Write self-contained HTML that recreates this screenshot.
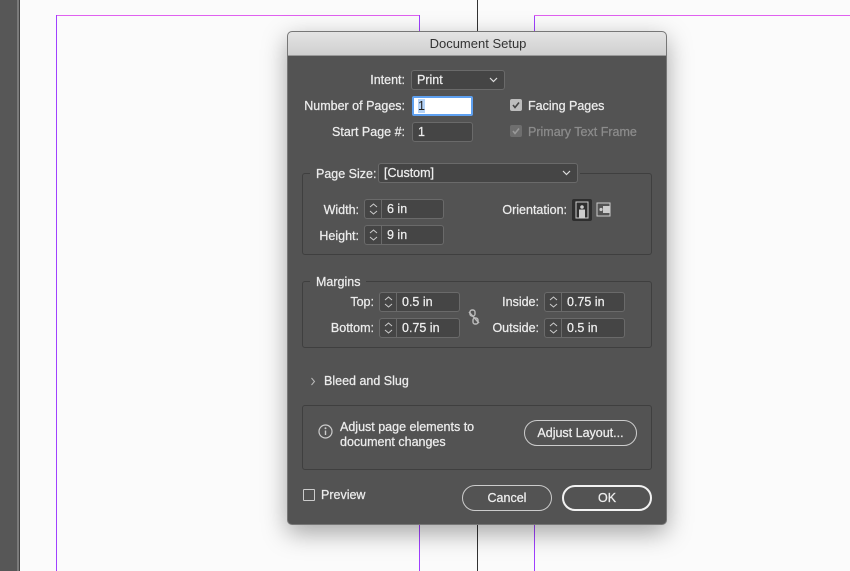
<!DOCTYPE html>
<html><head><meta charset="utf-8"><style>
*{box-sizing:border-box;margin:0;padding:0}
body{width:850px;height:571px;overflow:hidden;background:#fbfbfb;position:relative;font-family:"Liberation Sans",sans-serif;font-size:12.5px;color:#ececec}
.a{position:absolute}
.lbl,.txt,.fld,.spin,.btn{-webkit-text-stroke:0.25px currentColor}
.lbl{position:absolute;text-align:right;line-height:14px}
.txt{position:absolute;line-height:14px;white-space:nowrap}
.fld{position:absolute;background:#454545;border:1px solid #6a6a6a;border-radius:3px;height:20px;line-height:18px;padding-left:5px;color:#eee}
.spin{position:absolute;background:#454545;border:1px solid #6a6a6a;border-radius:3px;height:20px;line-height:18px;color:#eee}
.spin .s{position:absolute;left:0;top:0;width:17px;height:18px;border-right:1px solid #6a6a6a}
.spin .v{position:absolute;left:22px;top:0}
.box{position:absolute;border:1px solid #3f3f3f;border-radius:3px}
.cb{position:absolute;width:12px;height:12px;border-radius:2px}
.btn{position:absolute;border:1px solid #ccc;border-radius:13px;text-align:center;color:#eee}
.chev{position:absolute;right:6px;top:5px}
</style></head><body>
<div class="a" style="left:0;top:0;width:17px;height:571px;background:#575757"></div>
<div class="a" style="left:17px;top:0;width:2px;height:571px;background:#7a7a7a"></div>
<div class="a" style="left:19px;top:0;width:1px;height:571px;background:#444"></div>
<div class="a" style="left:56px;top:15px;width:364px;height:1px;background:#e060f0"></div>
<div class="a" style="left:56px;top:15px;width:1px;height:556px;background:#a040ff"></div>
<div class="a" style="left:419px;top:15px;width:1px;height:556px;background:#a040ff"></div>
<div class="a" style="left:477px;top:0;width:1px;height:571px;background:#333"></div>
<div class="a" style="left:534px;top:15px;width:1px;height:556px;background:#a040ff"></div>
<div class="a" style="left:534px;top:15px;width:316px;height:1px;background:#e060f0"></div>

<div class="a" style="left:287px;top:31px;width:380px;height:494px;background:#535353;border-radius:5px;box-shadow:0 8px 25px rgba(0,0,0,.35);overflow:hidden;border:1px solid #777">
  <div class="a" style="left:0;top:0;width:380px;height:24px;background:linear-gradient(#e4e4e4,#cfcfcf);border-bottom:1px solid #999;color:#333;text-align:center;line-height:24px;font-size:13px">Document Setup</div>
</div>

<div class="lbl" style="left:300px;top:73px;width:105px">Intent:</div>
<div class="fld" style="left:411px;top:70px;width:94px">Print<svg class="chev" width="9" height="8"><path d="M1 2l3.5 3.5L8 2" stroke="#ddd" stroke-width="1.2" fill="none"/></svg></div>
<div class="lbl" style="left:290px;top:99px;width:115px">Number of Pages:</div>
<div class="a" style="left:412px;top:96px;width:61px;height:20px;background:#fff;border:2px solid #5ea0f0;border-radius:2px;color:#222;line-height:16px;padding-left:4px"><span style="background:#b5d3f7">1</span></div>
<div class="lbl" style="left:300px;top:125px;width:105px">Start Page #:</div>
<div class="fld" style="left:412px;top:122px;width:61px">1</div>
<div class="cb" style="left:510px;top:99px;background:#bdbdbd"><svg width="12" height="12"><path d="M3 6l2 2.5 4-5" stroke="#444" stroke-width="1.6" fill="none"/></svg></div>
<div class="txt" style="left:528px;top:99px">Facing Pages</div>
<div class="cb" style="left:510px;top:125px;background:#6e6e6e"><svg width="12" height="12"><path d="M3 6l2 2.5 4-5" stroke="#999" stroke-width="1.6" fill="none"/></svg></div>
<div class="txt" style="left:528px;top:125px;color:#8c8c8c">Primary Text Frame</div>

<div class="box" style="left:302px;top:173px;width:350px;height:82px"></div>
<div class="a" style="left:310px;top:165px;width:270px;height:18px;background:#535353"></div>
<div class="txt" style="left:316px;top:167px">Page Size:</div>
<div class="fld" style="left:378px;top:163px;width:200px">[Custom]<svg class="chev" width="9" height="8"><path d="M1 2l3.5 3.5L8 2" stroke="#ddd" stroke-width="1.2" fill="none"/></svg></div>
<div class="lbl" style="left:300px;top:203px;width:59px">Width:</div>
<div class="spin" style="left:364px;top:199px;width:80px"><div class="s"><svg width="17" height="18"><path d="M5 7l3.5-3 3.5 3M5 11l3.5 3 3.5-3" stroke="#ccc" fill="none"/></svg></div><span class="v">6 in</span></div>
<div class="lbl" style="left:300px;top:229px;width:59px">Height:</div>
<div class="spin" style="left:364px;top:225px;width:80px"><div class="s"><svg width="17" height="18"><path d="M5 7l3.5-3 3.5 3M5 11l3.5 3 3.5-3" stroke="#ccc" fill="none"/></svg></div><span class="v">9 in</span></div>
<div class="lbl" style="left:480px;top:203px;width:87px">Orientation:</div>
<div class="a" style="left:572px;top:199px;width:20px;height:22px;background:#2e2e2e;border-radius:2px"><svg width="20" height="22"><rect x="4" y="3" width="12" height="16" fill="none" stroke="#ccc"/><circle cx="10" cy="8" r="1.8" fill="#ccc"/><rect x="7" y="10.5" width="6" height="8" fill="#ccc"/></svg></div>
<div class="a" style="left:596px;top:201px"><svg width="16" height="18"><rect x="1" y="2" width="13" height="13" fill="none" stroke="#ccc"/><circle cx="5" cy="8.5" r="1.6" fill="#ccc"/><rect x="7" y="5" width="7" height="7" fill="#ccc"/></svg></div>

<div class="box" style="left:302px;top:281px;width:350px;height:67px"></div>
<div class="a" style="left:310px;top:274px;width:56px;height:16px;background:#535353"></div>
<div class="txt" style="left:316px;top:275px">Margins</div>
<div class="lbl" style="left:310px;top:295px;width:64px">Top:</div>
<div class="spin" style="left:379px;top:292px;width:81px"><div class="s"><svg width="17" height="18"><path d="M5 7l3.5-3 3.5 3M5 11l3.5 3 3.5-3" stroke="#ccc" fill="none"/></svg></div><span class="v">0.5 in</span></div>
<div class="lbl" style="left:310px;top:321px;width:64px">Bottom:</div>
<div class="spin" style="left:379px;top:318px;width:81px"><div class="s"><svg width="17" height="18"><path d="M5 7l3.5-3 3.5 3M5 11l3.5 3 3.5-3" stroke="#ccc" fill="none"/></svg></div><span class="v">0.75 in</span></div>
<div class="a" style="left:467px;top:308px"><svg width="14" height="18"><rect x="3" y="2" width="5" height="6" rx="2" stroke="#bbb" stroke-width="1.4" fill="none"/><rect x="6" y="10" width="5" height="6" rx="2" stroke="#bbb" stroke-width="1.4" fill="none"/><path d="M2 4l10 11" stroke="#bbb" stroke-width="1.5"/></svg></div>
<div class="lbl" style="left:470px;top:295px;width:69px">Inside:</div>
<div class="spin" style="left:544px;top:292px;width:81px"><div class="s"><svg width="17" height="18"><path d="M5 7l3.5-3 3.5 3M5 11l3.5 3 3.5-3" stroke="#ccc" fill="none"/></svg></div><span class="v">0.75 in</span></div>
<div class="lbl" style="left:470px;top:321px;width:69px">Outside:</div>
<div class="spin" style="left:544px;top:318px;width:81px"><div class="s"><svg width="17" height="18"><path d="M5 7l3.5-3 3.5 3M5 11l3.5 3 3.5-3" stroke="#ccc" fill="none"/></svg></div><span class="v">0.5 in</span></div>

<div class="a" style="left:310px;top:375px"><svg width="6" height="9"><path d="M1.5 1l3 3.5-3 3.5" stroke="#bbb" fill="none"/></svg></div>
<div class="txt" style="left:324px;top:374px">Bleed and Slug</div>

<div class="box" style="left:302px;top:405px;width:350px;height:65px"></div>
<div class="a" style="left:318px;top:424px"><svg width="15" height="15"><circle cx="7.5" cy="7.5" r="6.5" stroke="#ccc" fill="none" stroke-width="1.2"/><circle cx="7.5" cy="4.3" r="1" fill="#ccc"/><path d="M7.5 6.5v4.5" stroke="#ccc" stroke-width="1.4"/></svg></div>
<div class="txt" style="left:340px;top:420px;line-height:15px">Adjust page elements to<br>document changes</div>
<div class="btn" style="left:524px;top:420px;width:113px;height:26px;line-height:24px">Adjust Layout...</div>

<div class="cb" style="left:303px;top:489px;border:1px solid #ccc;border-radius:1px"></div>
<div class="txt" style="left:321px;top:488px">Preview</div>
<div class="btn" style="left:462px;top:485px;width:90px;height:26px;line-height:24px">Cancel</div>
<div class="btn" style="left:562px;top:485px;width:90px;height:26px;line-height:22px;border:2px solid #f2f2f2">OK</div>
</body></html>
